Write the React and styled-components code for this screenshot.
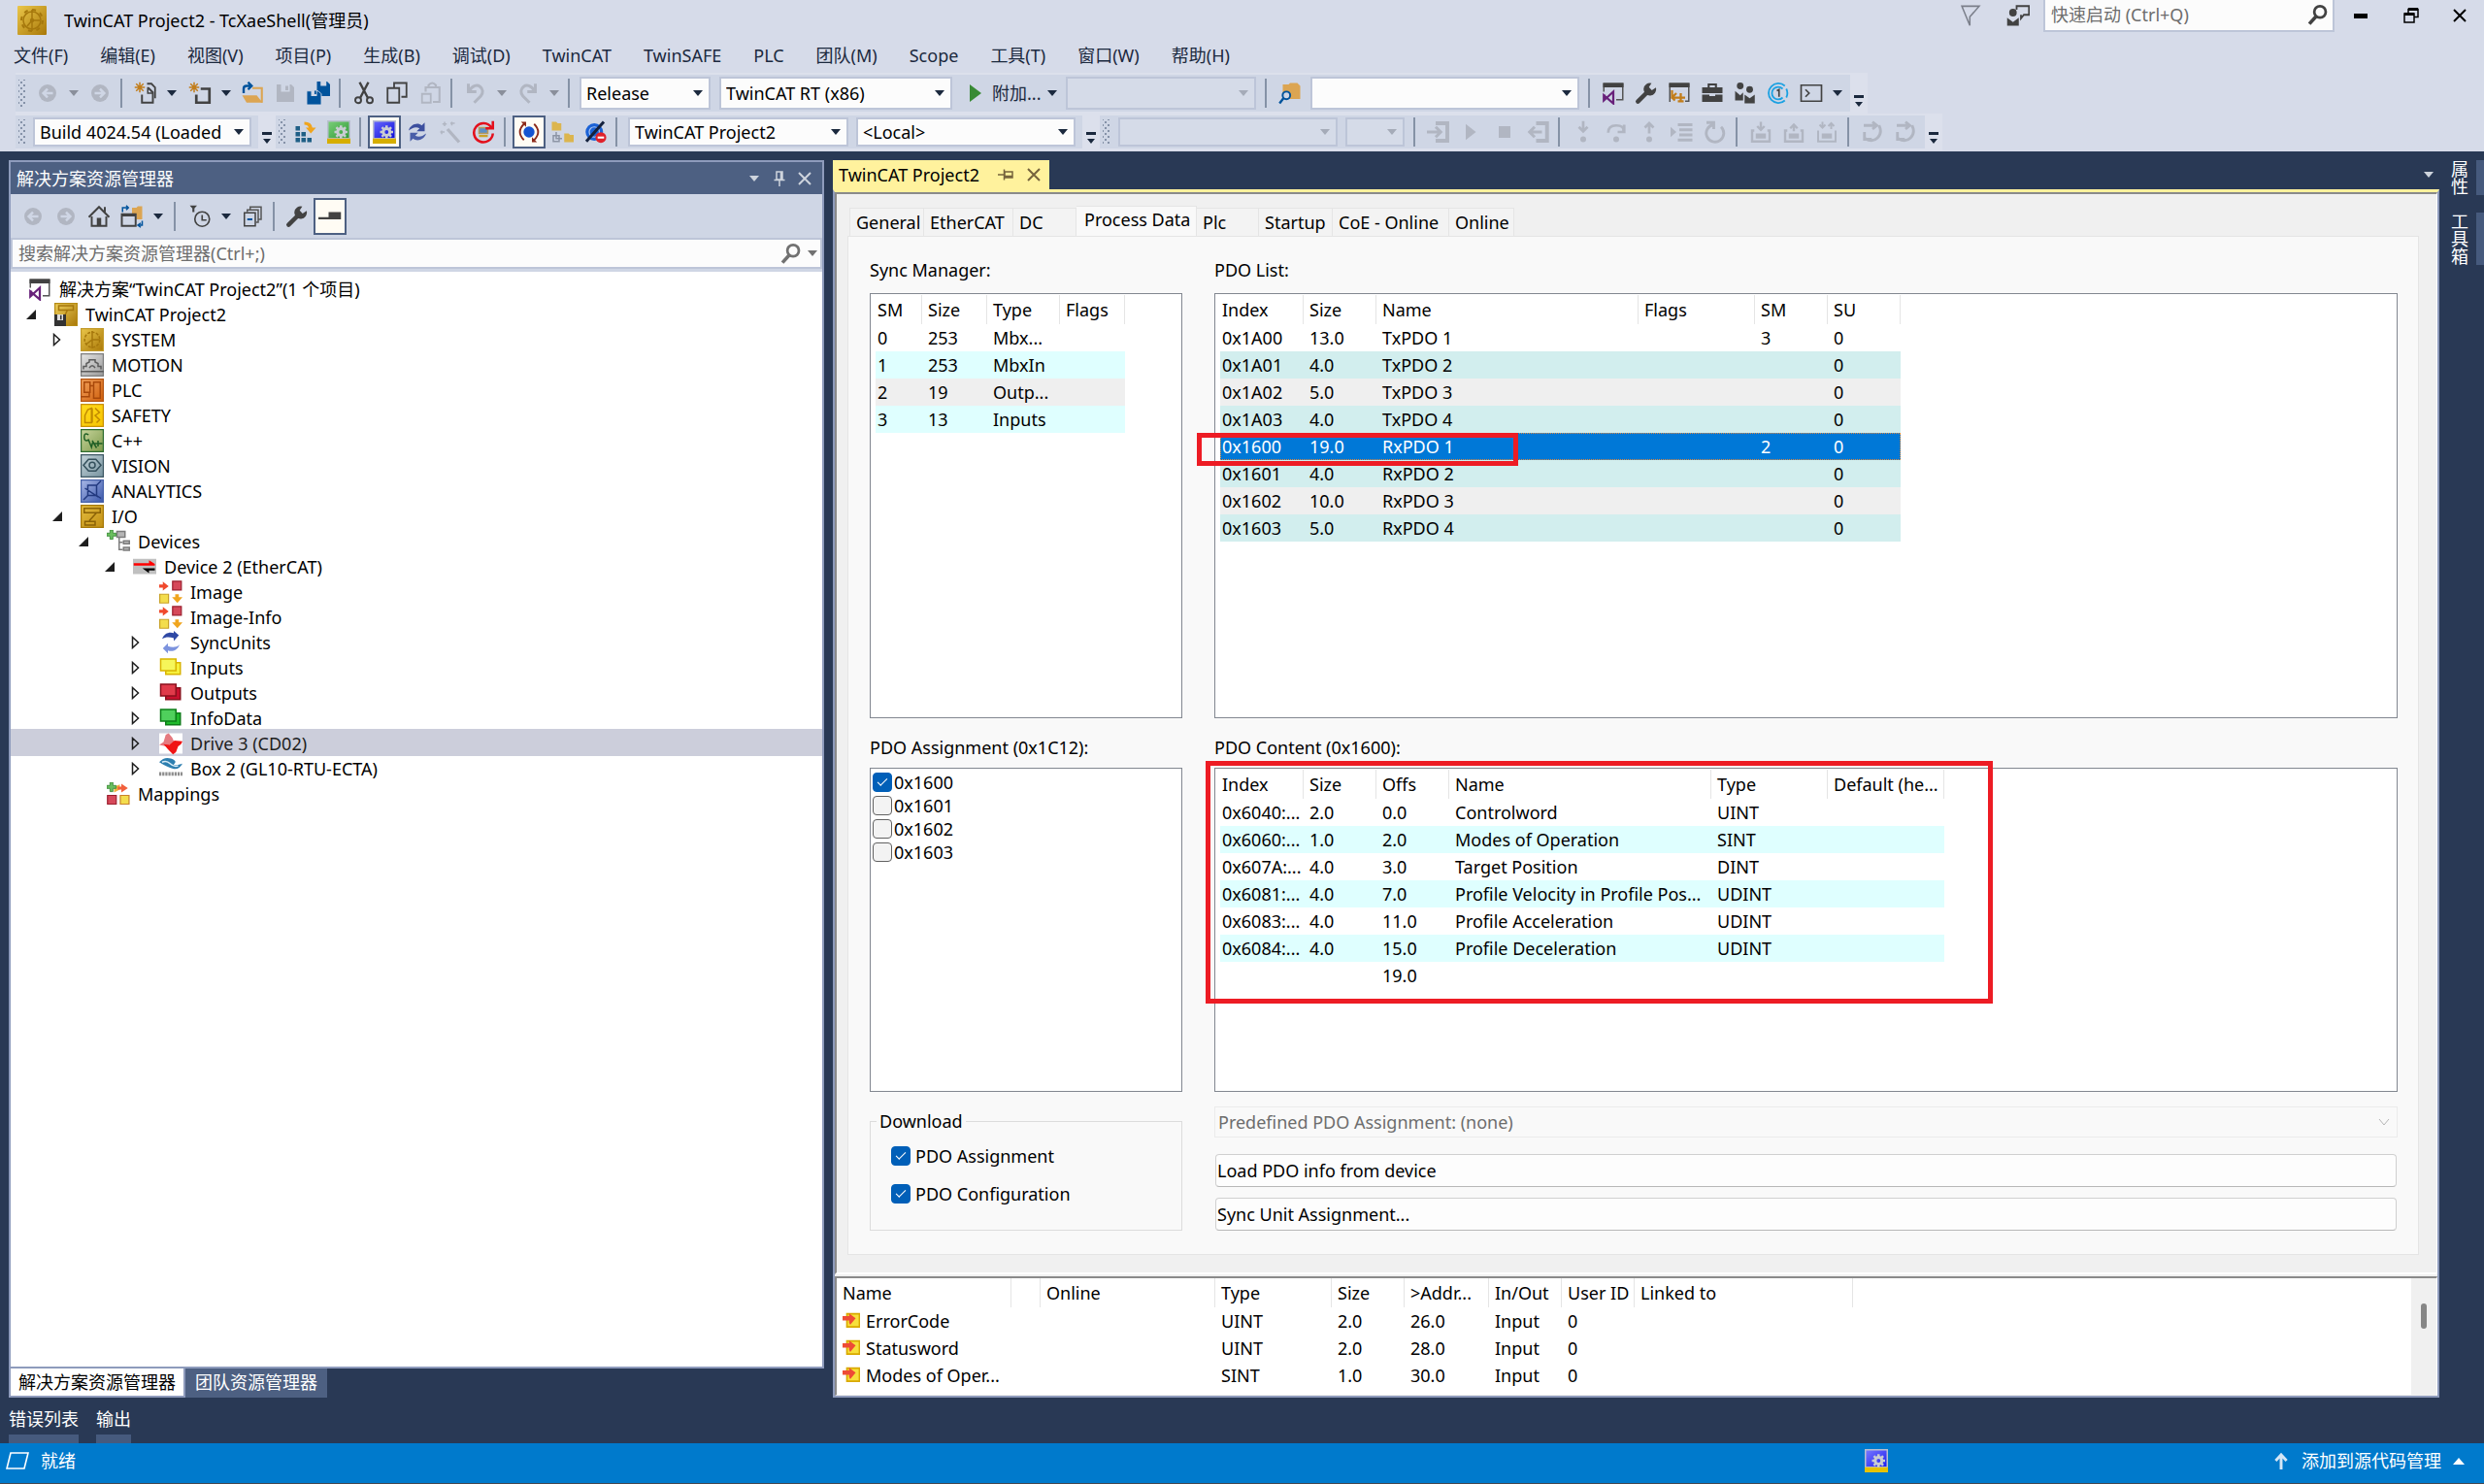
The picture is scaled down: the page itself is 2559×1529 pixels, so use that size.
import React from 'react';
import styled, { createGlobalStyle, css } from 'styled-components';

const c = {
  shell: '#293955',
  header: '#d6dbe9',
  bar: '#cfd6e5',
  barEdge: '#dce0ec',
  frame: '#8e9bbc',
  title: '#4d6082',
  inputEdge: '#bdc5d8',
  ink: '#1b293e',
  dim: '#b1b6c2',
  accent: '#007acc',
  pressed: '#fffcf4',
  mark: '#ed1c24',
};

const Global = createGlobalStyle`
  *, *::before, *::after { box-sizing: border-box; }
  body {
    margin: 0;
    background: ${c.shell};
    color: #000;
    font: 18px/24px 'Noto Sans', 'Noto Sans CJK SC', sans-serif;
  }
  button, input, select { font: inherit; color: inherit; }
  button { padding: 0; border: 0; background: none; }
  svg { display: block; flex: none; }
`;

/* ---------- Shell ---------- */

const Shell = styled.div`
  display: flex;
  flex-direction: column;
  height: 100vh;
  min-height: 900px;
  overflow: hidden;
`;

const Header = styled.header`
  background: ${c.header};
  height: 156px;
  flex: none;
`;

const TitleBar = styled.div`
  display: flex;
  align-items: flex-start;
  height: 42px;
  padding-left: 18px;
`;

const AppTitle = styled.h1`
  display: flex;
  align-items: center;
  gap: 18px;
  height: 42px;
  margin: 0 auto 0 0;
  font-size: 18px;
  font-weight: 400;
`;

const TitleTools = styled.div`
  display: flex;
  align-items: center;
  height: 32px;
`;

const TitleButton = styled.button`
  display: grid;
  place-items: center;
  width: ${(p) => p.$w}px;
  height: 32px;
`;

const QuickLaunch = styled.label`
  display: flex;
  align-items: center;
  width: 300px;
  height: 33px;
  padding-right: 4px;
  background: #fcfcfc;
  border: 2px solid ${c.inputEdge};
  border-top: 0;
`;

const PlainInput = styled.input`
  flex: 1;
  min-width: 0;
  height: 100%;
  padding: 0 6px;
  border: 0;
  outline: 0;
  background: none;
  &::placeholder { color: #6d6d6d; opacity: 1; }
`;

const MenuBar = styled.nav`
  display: flex;
  gap: 33px;
  height: 33px;
  padding-left: 14px;
`;

const MenuItem = styled.button`
  height: 30px;
  white-space: nowrap;
  color: ${c.ink};
`;

/* ---------- Toolbars ---------- */

const ToolRow = styled.div`
  display: flex;
  height: ${(p) => p.$h}px;
  padding-left: 16px;
`;

const Strip = styled.div`
  display: flex;
  align-items: center;
  padding-right: ${(p) => p.$end || 3}px;
  background: ${c.bar};
  border: solid ${c.barEdge};
  border-width: 2px 0;
`;

const Grip = styled.span`
  width: 8px;
  height: ${(p) => p.$h || 28}px;
  margin: 0 ${(p) => p.$after || 8}px 0 3px;
  background-image: radial-gradient(circle, #8592a8 1px, transparent 1px),
    radial-gradient(circle, #8592a8 1px, transparent 1px);
  background-size: 6px 6px;
  background-position: 0 0, 3px 3px;
`;

const Sep = styled.span`
  width: 2px;
  height: 30px;
  margin: 0 ${(p) => p.$after || 7}px 0 ${(p) => p.$before || 4}px;
  background: #8592a6;
`;

const ToolButton = styled.button`
  display: grid;
  place-items: center;
  width: 34px;
  height: 32px;
  ${(p) =>
    p.$on &&
    css`
      background: ${c.pressed};
      border: 2px solid ${c.title};
      height: ${p.$tall ? 38 : 34}px;
    `}
`;

const ArrowButton = styled.button`
  display: grid;
  place-items: center;
  width: 20px;
  height: 32px;
  margin-right: ${(p) => p.$after || 0}px;
`;

const AttachButton = styled.button`
  display: flex;
  align-items: center;
  gap: 11px;
  margin: 0 2px 0 18px;
  color: ${c.ink};
`;

const ComboBox = styled.span`
  display: grid;
  align-items: center;
  width: ${(p) => p.$w}px;
  height: ${(p) => p.$h || 34}px;
  margin-left: ${(p) => p.$before || 0}px;
  background: ${(p) => (p.$off ? '#d5dbe8' : '#fcfcfc')};
  border: 2px solid ${c.inputEdge};
  > * { grid-area: 1 / 1; }
  > svg { justify-self: end; margin-right: 6px; pointer-events: none; }
`;

const ComboSelect = styled.select`
  appearance: none;
  width: 100%;
  height: 100%;
  padding: 0 20px 0 5px;
  border: 0;
  outline: 0;
  background: none;
  opacity: 1;
`;

const OverflowButton = styled.button`
  display: flex;
  align-items: flex-end;
  justify-content: center;
  width: 18px;
  padding-bottom: 6px;
  background: ${c.barEdge};
`;

/* ---------- Workspace ---------- */

const Workspace = styled.main`
  display: flex;
  flex: 1;
  min-height: 0;
  padding: 9px 0 0 9px;
`;

const Side = styled.aside`
  display: flex;
  flex-direction: column;
  width: 840px;
  flex: none;
`;

const SidePanel = styled.section`
  display: flex;
  flex-direction: column;
  flex: 1;
  min-height: 0;
  border: 2px solid ${c.frame};
`;

const PanelTitle = styled.h2`
  display: flex;
  align-items: center;
  height: 33px;
  margin: 0;
  padding: 0 5px 0 6px;
  background: ${c.title};
  color: #fff;
  font-size: 18px;
  font-weight: 400;
  > span { flex: 1; }
`;

const PanelButton = styled.button`
  display: grid;
  place-items: center;
  width: 26px;
  height: 30px;
`;

const PanelTools = styled.div`
  display: flex;
  align-items: center;
  height: 45px;
  padding-left: 6px;
  background: ${c.bar};
`;

const PanelSearch = styled.label`
  display: flex;
  align-items: center;
  gap: 6px;
  height: 32px;
  padding-right: 3px;
  background: #fcfcfc;
  border: 2px solid ${c.inputEdge};
`;

const Tree = styled.ul`
  flex: 1;
  margin: 0;
  padding: 5px 0 0;
  list-style: none;
  background: #fff;
  border-top: 3px solid ${c.bar};
  overflow: hidden;
`;

const TreeItem = styled.li`
  display: flex;
  align-items: center;
  height: 26px;
  padding-left: ${(p) => (p.$level ? p.$level * 27 - 12 : 18)}px;
  white-space: nowrap;
  ${(p) =>
    p.$selected &&
    css`
      background: #cccedb;
      box-shadow: 0 -2px #cccedb;
      color: #1e1e1e;
    `}
`;

const Twisty = styled.span`
  display: flex;
  width: 30px;
  padding-left: 1px;
`;

const TreeLabel = styled.span`
  margin-left: 8px;
`;

const SideTabs = styled.div`
  display: flex;
  height: 30px;
`;

const SideTab = styled.button`
  height: 30px;
  padding: 0 8px;
  background: ${(p) => (p.$active ? '#fff' : c.title)};
  color: ${(p) => (p.$active ? '#000' : '#fff')};
  border: 2px solid ${(p) => (p.$active ? c.frame : c.title)};
  border-top: 0;
`;

const Doc = styled.section`
  display: flex;
  flex-direction: column;
  flex: 1;
  min-width: 0;
  margin-left: 9px;
`;

const DocTabs = styled.div`
  display: flex;
  align-items: center;
  justify-content: space-between;
  height: 30px;
  padding-right: 6px;
`;

const DocTab = styled.div`
  display: flex;
  align-items: center;
  align-self: stretch;
  gap: 14px;
  padding: 0 9px 0 6px;
  background: #fff29d;
  > span { margin-right: 5px; }
`;

const Editor = styled.div`
  display: flex;
  flex-direction: column;
  flex: 1;
  min-height: 0;
  background: #f0f0f0;
  border: 2px solid ${c.frame};
  border-top: 3px solid #fff29d;
`;

const EditorPane = styled.div`
  display: flex;
  flex-direction: column;
  flex: 1;
  min-height: 0;
  padding: 12px 18px 18px 11px;
  border: 2px solid #8a8a8a;
  border-right: 1px solid #fff;
  border-bottom: 2px solid #fff;
`;

const PageTabs = styled.div`
  display: flex;
  align-items: flex-end;
  height: 32px;
  padding-left: 2px;
  margin-bottom: -1px;
`;

const PageTab = styled.button`
  width: ${(p) => p.$w}px;
  height: ${(p) => (p.$active ? 32 : 30)}px;
  padding: 0 0 ${(p) => (p.$active ? 4 : 0)}px ${(p) => (p.$active ? 8 : 6)}px;
  text-align: left;
  white-space: nowrap;
  background: ${(p) => (p.$active ? '#f9f9f9' : '#f3f3f3')};
  border: 1px solid #e5e5e5;
  border-left-width: ${(p) => (p.$first ? 1 : 0)}px;
  border-bottom-color: ${(p) => (p.$active ? '#f9f9f9' : '#e5e5e5')};
`;

const Page = styled.div`
  display: grid;
  grid-template-columns: 322px minmax(0, 1fr);
  grid-template-rows: 36px minmax(0, 438fr) 51px minmax(0, 334fr) 143px;
  column-gap: 33px;
  flex: 1;
  min-height: 0;
  padding: 22px 21px 24px 22px;
  background: #f9f9f9;
  border: 1px solid #e5e5e5;
`;

const BoxLabel = styled.h3`
  margin: 0;
  font-size: 18px;
  font-weight: 400;
  align-self: ${(p) => (p.$low ? 'end' : 'start')};
  padding-bottom: ${(p) => (p.$low ? 9 : 0)}px;
`;

const ListBox = styled.div`
  position: relative;
  padding: 1px 0 0 5px;
  background: #fff;
  border: 1px solid #828790;
`;

const Marker = styled.div`
  position: absolute;
  left: ${(p) => p.$x}px;
  top: ${(p) => p.$y}px;
  width: ${(p) => p.$w}px;
  height: ${(p) => p.$h}px;
  border: 5px solid ${c.mark};
  pointer-events: none;
`;

const Table = styled.table`
  table-layout: fixed;
  width: ${(p) => p.$w}px;
  border-collapse: separate;
  border-spacing: 0;
  th, td {
    height: 28px;
    padding: 0 0 0 6px;
    font-weight: 400;
    text-align: left;
    white-space: nowrap;
    overflow: hidden;
  }
  th { height: 30px; border-right: 1px solid #e5e5e5; }
  th:first-child, td:first-child { padding-left: ${(p) => p.$lead}px; }
`;

const Row = styled.tr`
  background: ${(p) => p.$bg || '#fff'};
  ${(p) =>
    p.$selected &&
    css`
      color: #fff;
      outline: 1px dotted #e08b3c;
      outline-offset: -1px;
    `}
`;

const CheckRow = styled.label`
  display: flex;
  align-items: center;
  gap: ${(p) => p.$gap}px;
  height: ${(p) => p.$h}px;
`;

const Check = styled.input`
  appearance: none;
  display: grid;
  place-items: center;
  width: 20px;
  height: 20px;
  margin: 0;
  background: #f3f3f3;
  border: 1px solid #626262;
  border-radius: 4px;
  &:checked { background: #005fb8; border-color: #005fb8; }
  &:checked::before {
    content: '';
    width: 10px;
    height: 5px;
    margin-bottom: 3px;
    border: solid #fff;
    border-width: 0 0 1px 1px;
    transform: rotate(-45deg);
  }
`;

const AssignBox = styled(ListBox)`
  padding: 2px 0 0 2px;
`;

const Download = styled.fieldset`
  align-self: end;
  height: 125px;
  min-width: 0;
  margin: 0;
  padding: 4px 0 0 21px;
  border: 1px solid #dcdcdc;
  legend { margin-left: -15px; padding: 0 3px; line-height: 24px; }
`;

const Actions = styled.div`
  display: flex;
  flex-direction: column;
  gap: 11px;
  padding-top: 15px;
`;

const Predefined = styled.span`
  display: grid;
  align-items: center;
  height: 32px;
  margin-bottom: 6px;
  border: 1px solid #ebebeb;
  color: #6d6d6d;
  > * { grid-area: 1 / 1; }
  > svg { justify-self: end; margin-right: 7px; pointer-events: none; }
  select {
    appearance: none;
    height: 30px;
    padding: 0 3px;
    border: 0;
    background: none;
    opacity: 1;
  }
`;

const WideButton = styled.button`
  height: 34px;
  margin: 0 1px;
  padding-left: 1px;
  text-align: left;
  background: #fdfdfd;
  border: 1px solid #d0d0d0;
  border-bottom-color: #b8b8b8;
  border-radius: 4px;
`;

const VarPane = styled.div`
  display: flex;
  align-items: flex-start;
  justify-content: space-between;
  height: 123px;
  margin-top: 2px;
  flex: none;
  background: #fff;
  border: 2px solid #8a8a8a;
  border-right: 1px solid #fff;
  border-bottom: 1px solid #f0f0f0;
  overflow: hidden;
`;

const NameCell = styled.span`
  display: flex;
  align-items: center;
  gap: 6px;
`;

const ScrollTrack = styled.div`
  align-self: stretch;
  width: 26px;
  padding: 26px 0 0 10px;
  background: #f0f0f0;
`;

const ScrollThumb = styled.div`
  width: 6px;
  height: 26px;
  border-radius: 3px;
  background: #868686;
`;

const Rail = styled.nav`
  display: flex;
  flex-direction: column;
  align-items: flex-end;
  gap: 18px;
  width: 46px;
  flex: none;
`;

const RailTab = styled.button`
  writing-mode: vertical-rl;
  line-height: 36px;
  padding: 0;
  color: #fff;
  border-right: 8px solid #465a7d;
`;

const OutputTabs = styled.div`
  display: flex;
  gap: 18px;
  height: 47px;
  padding: 8px 0 0 9px;
  flex: none;
`;

const OutputTab = styled.button`
  color: #fff;
  padding-bottom: 2px;
  border-bottom: 9px solid #465a7d;
`;

const StatusBar = styled.footer`
  display: flex;
  align-items: center;
  height: 42px;
  padding: 0 20px 5px 6px;
  flex: none;
  background: ${c.accent};
  color: #fff;
  border-bottom: 1px solid #47484f;
`;

const StatusText = styled.span`
  margin: 0 auto 0 12px;
`;

const SourceControl = styled.button`
  display: flex;
  align-items: center;
  gap: 12px;
  margin-left: 396px;
`;

/* ---------- Icons ---------- */

const I = ({ s = 24, children, ...rest }) => (
  <svg width={s} height={s} viewBox="0 0 16 16" fill="none" aria-hidden="true" {...rest}>
    {children}
  </svg>
);

const Caret = ({ color = c.ink }) => (
  <svg width="10" height="6" viewBox="0 0 10 6" aria-hidden="true">
    <path d="M0 0h10L5 6z" fill={color} />
  </svg>
);

const OverflowMark = () => (
  <svg width="10" height="13" viewBox="0 0 10 13" aria-hidden="true">
    <path d="M0 0h10v3H0zM1 7h8l-4 5z" fill={c.ink} />
  </svg>
);

const GearTile = ({ light, top, base }) => {
  const id = 'g' + top.slice(1);
  return (
    <I>
      <defs>
        <linearGradient id={id} x1="0" y1="0" x2="1" y2="1">
          <stop offset="0" stopColor={light} />
          <stop offset="1" stopColor={top} />
        </linearGradient>
      </defs>
      <path d="M.5.5h15v12H.5z" fill={`url(#${id})`} stroke="#b9bfd0" />
      <path d="M0 12.500h16V16H0z" fill={base} />
      <g stroke="#c9ccd2" transform="translate(9.5 8)">
        <circle r="2.300" strokeWidth="2" />
        <path d="M0-4.500v2M0 2.500v2M-4.500 0h2M2.500 0h2M-3.200-3.200l1.400 1.400M1.800 1.800l1.400 1.400M-3.200 3.200l1.400-1.400M1.800-1.800l1.400-1.400" strokeWidth="1.700" />
      </g>
    </I>
  );
};

const Logo = () => (
  <svg width="30" height="30" viewBox="0 0 30 30" aria-hidden="true">
    <defs>
      <linearGradient id="gold" x1="0" y1="0" x2="1" y2="1">
        <stop offset="0" stopColor="#eac64a" />
        <stop offset="1" stopColor="#a97808" />
      </linearGradient>
    </defs>
    <rect width="30" height="30" rx="1" fill="url(#gold)" />
    <circle cx="15" cy="15" r="9" fill="none" stroke="#a5770c" strokeWidth="1.500" />
    <circle cx="15" cy="15" r="11" fill="none" stroke="#a5770c" strokeWidth="2" strokeDasharray="4 4.6" />
    <path d="M15 4v22M15 15h8M15 15l-5 6" stroke="#a5770c" strokeWidth="1.500" fill="none" />
    <circle cx="15" cy="15" r="2.200" fill="#a5770c" />
  </svg>
);

const NavArrow = ({ flip, color = c.dim }) => (
  <I s={22} style={flip ? { transform: 'scaleX(-1)' } : undefined}>
    <circle cx="8" cy="8" r="6.500" fill={color} />
    <path d="M12 8H5M8 4.800L4.800 8 8 11.200" stroke={c.bar} strokeWidth="1.800" />
  </I>
);

const spark = 'M4 .5v7M.5 4h7M1.500 1.500l5 5M6.500 1.500l-5 5';

const icons = {
  newProject: (
    <I>
      <path d="M9 1.500h3l2.500 2.500v7.500" stroke="#424242" strokeWidth="1.200" />
      <path d="M9 4.500h1l3 3v7H5.500V9" stroke="#424242" strokeWidth="1.300" />
      <path d="M9.500 5v3H13" stroke="#424242" />
      <path d={spark} stroke="#c27d1a" />
    </I>
  ),
  addItem: (
    <I>
      <path d="M8.500 5h6v9.500h-9V9" stroke="#424242" strokeWidth="1.800" />
      <path d={spark} stroke="#c27d1a" />
    </I>
  ),
  open: (
    <I>
      <path d="M1 9.500h10l4 5H4z" fill="#dca552" />
      <path d="M8 4.500h6.500v10" stroke="#dca552" strokeWidth="1.400" />
      <path d="M2 8V5q0-2 2-2h3M5 .5L7.500 3 5 5.500" stroke="#00539c" strokeWidth="1.600" />
    </I>
  ),
  save: (color) => (
    <I>
      <path d="M2 2h10l2 2v10H2z" fill={color} />
      <path d="M5 2h6v5H5z" fill={c.bar} />
      <path d="M8 3h2v3H8z" fill={color} />
    </I>
  ),
  saveAll: (
    <I>
      <path d="M7 0h7l2 2v8H7z" fill="#00539c" />
      <path d="M9.500 0h4v3h-4z" fill={c.bar} />
      <path d="M0 6.500h8l2 2V16H0z" fill="#00539c" stroke={c.bar} strokeWidth=".6" />
      <path d="M3 6.300h4v3.700H3z" fill={c.bar} />
      <path d="M5.300 6.300h1.200v2.400H5.300z" fill="#00539c" />
    </I>
  ),
  cut: (
    <I>
      <path d="M5 .5l5.500 10.500M11 .5L5.500 11" stroke="#424242" strokeWidth="1.600" />
      <circle cx="4" cy="12.800" r="2" stroke="#424242" strokeWidth="1.300" />
      <circle cx="12" cy="12.800" r="2" stroke="#424242" strokeWidth="1.300" />
    </I>
  ),
  copy: (
    <I>
      <path d="M6 4V1h8.500v9.500H11" stroke="#424242" strokeWidth="1.200" />
      <path d="M1.500 4.500H9.500v10h-8z" stroke="#424242" strokeWidth="1.200" />
    </I>
  ),
  paste: (
    <I>
      <path d="M5 7V4h9.500v10H10M7 4V2.500q2.500-3 5 0V4" stroke={c.dim} strokeWidth="1.400" />
      <path d="M2.500 8.500H8.500v6h-6z" stroke={c.dim} strokeWidth="1.200" />
    </I>
  ),
  undo: (
    <I>
      <path d="M3 1.500V7h5.500" stroke={c.dim} strokeWidth="2" />
      <path d="M3.500 6.500C6 2.500 9 2 11 3.500s2.500 4 .5 6.500L7 14.500" stroke={c.dim} strokeWidth="2" />
    </I>
  ),
  redo: (
    <I>
      <path d="M13 1.500V7H7.500" stroke={c.dim} strokeWidth="2" />
      <path d="M12.500 6.500C10 2.500 7 2 5 3.500s-2.500 4-.5 6.500L9 14.500" stroke={c.dim} strokeWidth="2" />
    </I>
  ),
  play: (
    <svg width="12" height="18" viewBox="0 0 12 18" aria-hidden="true">
      <path d="M0 0l12 9-12 9z" fill="#388a34" />
    </svg>
  ),
  folderSearch: (
    <I>
      <path d="M3 2h4l1-1h5l2 2v9H8L3 9z" fill="#dca552" />
      <circle cx="5.500" cy="9.500" r="2.600" fill={c.bar} stroke="#00539c" strokeWidth="1.300" />
      <path d="M3.600 11.400L.8 15" stroke="#00539c" strokeWidth="1.600" />
    </I>
  ),
  vs: (
    <I>
      <path d="M1.500 7V1.500h13v11H10" stroke="#555" />
      <path d="M1 1h14v3H1z" fill="#424242" />
      <path d="M8 7v8L1.500 9.500v3.500zM2 9v4" fill="none" stroke="#68217a" strokeWidth="1.500" />
    </I>
  ),
  wrench: (
    <I>
      <path d="M2.200 13.800L9 7" stroke="#424242" strokeWidth="3" strokeLinecap="round" />
      <path d="M14.600 4.200a4.300 4.300 0 1 1-3-3L9.800 3.800l2 2.200z" fill="#424242" />
    </I>
  ),
  windowOrg: (
    <I>
      <path d="M1.500 14V1.500h13v12H12" stroke="#555" />
      <path d="M1 1h14v3H1z" fill="#424242" />
      <path d="M3 6v5h6M6 8l-3 3 2 2M9 8v6M7 11h5M7 13.500h4" stroke="#c27d1a" strokeWidth="1.500" />
    </I>
  ),
  toolbox: (
    <I>
      <path d="M5.500 4V2h5v2" stroke="#424242" strokeWidth="1.400" />
      <path d="M1 4h14v4H1zM1 9h5v1h4V9h5v5H1z" fill="#424242" />
    </I>
  ),
  people: (
    <I>
      <circle cx="4.500" cy="3" r="2.300" fill="#424242" />
      <circle cx="11" cy="5.500" r="2.300" fill="#424242" />
      <path d="M1 6.500l3.500 3 2-2V13H1zM7.500 9l3.500 2.500L14.500 9v6h-7z" fill="#424242" />
    </I>
  ),
  circleOne: (
    <I>
      <path d="M12.500 3A6.700 6.700 0 1 0 12.500 13M11 5A4.300 4.300 0 1 0 11 11M13.500 5q1.500 3 0 6" stroke="#1ba1e2" strokeWidth="1.200" />
      <path d="M7 6.300L8.500 5.500v5" stroke="#424242" strokeWidth="1.100" />
    </I>
  ),
  command: (
    <I>
      <path d="M1 2.500h14v11H1z" stroke="#424242" strokeWidth="1.100" />
      <path d="M4 5.500L6.500 8 4 10.500" stroke="#424242" strokeWidth="1.100" />
    </I>
  ),
  download: (
    <I>
      <path d="M1 4h3v3H1zM1 8h3v3H1zM1 12h3v3H1zM5 8h3v3H5zM5 12h3v3H5zM9 12h3v3H9z" fill="#1f5f86" />
      <path d="M7 1q5 0 5.500 4H15l-3.500 4L8 5h2Q9.500 3 7 3z" fill="#f0a51e" />
    </I>
  ),
  sync: (
    <I>
      <path d="M2 7c1-4 6-6 9-3.500L13 1.500V7.500H7.500L9.500 5.500C7 4 4.500 5 2 7z" fill="#3c4f9e" />
      <path d="M14 9c-1 4-6 6-9 3.500L3 14.500V8.500h5.500L6.500 10.500C9 12 11.500 11 14 9z" fill="#4a5ea8" />
    </I>
  ),
  wand: (
    <I>
      <path d="M6 6l8 9" stroke={c.dim} strokeWidth="2.200" />
      <path d="M4 1v3M2.500 2.500h3M9 1v2.500M8 2h3M2 7v2.500M1 8h3" stroke={c.dim} />
    </I>
  ),
  restart: (
    <I>
      <path d="M5 5h6v4H5z" fill="#5b8fc7" stroke="#b89a5a" />
      <path d="M5 10h6v1.500H5z" fill="#c9a227" />
      <path d="M13.500 5A6.500 6.500 0 1 0 14.500 9M14.500 .5v5H9.500" stroke="#e3101c" strokeWidth="1.700" />
    </I>
  ),
  target: (
    <I>
      <circle cx="8" cy="8" r="3.800" fill="#1554d1" />
      <path d="M4.500 2.500Q-1 8 4.500 13.500M11.500 2.500Q17 8 11.500 13.500" stroke="#8c2a1a" strokeWidth="1.200" />
      <path d="M2.500 1H6v3.500zM13.500 15H10v-3.500z" fill="#8c2a1a" />
    </I>
  ),
  folders: (
    <I>
      <path d="M1 1h3l1 1h2.500v5H1zM9.500 9h3l1 1H16v5H9.500z" fill="#dcb54e" />
      <path d="M4 8v4.500h4M2 10.500h4v4H2z" stroke="#8d95a5" />
    </I>
  ),
  noTarget: (
    <I>
      <circle cx="7.500" cy="8" r="6" fill="#1b62d6" />
      <circle cx="7.500" cy="8" r="3.500" stroke="#a9c4f0" strokeWidth=".8" />
      <path d="M2 14.500L14 1" stroke="#14213d" strokeWidth="2" />
      <circle cx="12" cy="11.800" r="3.700" fill="#e0212b" />
      <path d="M9.800 11.800h4.400" stroke="#fff" strokeWidth="1.400" />
    </I>
  ),
  login: (
    <I>
      <path d="M6 2h8v12H6" stroke={c.dim} strokeWidth="2.600" />
      <path d="M0 8h9M6 4.500L9.500 8 6 11.500" stroke={c.dim} strokeWidth="2" />
    </I>
  ),
  start: (
    <I>
      <path d="M4 2.500l7 5.500-7 5.500z" fill={c.dim} />
    </I>
  ),
  stop: (
    <I>
      <path d="M4 4h8v8H4z" fill={c.dim} />
    </I>
  ),
  logout: (
    <I>
      <path d="M7 2h7.500v12H7" stroke={c.dim} strokeWidth="2.600" />
      <path d="M2 8h9M6 4.500L2.500 8 6 11.500" stroke={c.dim} strokeWidth="2" />
    </I>
  ),
  stepInto: (
    <I>
      <path d="M8 .5v7M5 4.500l3 3 3-3" stroke={c.dim} strokeWidth="1.800" />
      <circle cx="8" cy="13" r="2" fill={c.dim} />
    </I>
  ),
  stepOver: (
    <I>
      <path d="M2.500 8.500q0-5 5.500-5t5 4M13.500 3v5H9" stroke={c.dim} strokeWidth="1.800" />
      <circle cx="8" cy="13" r="2" fill={c.dim} />
    </I>
  ),
  stepOut: (
    <I>
      <path d="M8 9V2M5 5l3-3 3 3" stroke={c.dim} strokeWidth="1.800" />
      <circle cx="8" cy="13" r="2" fill={c.dim} />
    </I>
  ),
  runTo: (
    <I>
      <path d="M0 4.500L4 8l-4 3.500zM5 2h10v2H5zM6 5.500h9v2H6zM6 9h9v2H6zM5 12.500h10v2H5z" fill={c.dim} />
    </I>
  ),
  cycle: (
    <I>
      <path d="M6.500 3A6 6 0 1 0 12 4.500M2 1.500h5v4.500" stroke={c.dim} strokeWidth="1.900" />
    </I>
  ),
  boxIn: (
    <I>
      <path d="M3.500 7H2v7.500h12V7h-1.500M8 1v5M5.500 4L8 6.500 10.500 4" stroke={c.dim} strokeWidth="1.600" />
      <path d="M4.500 9h7v3.500h-7z" fill={c.dim} />
    </I>
  ),
  boxOut: (
    <I>
      <path d="M3.500 7H2v7.500h12V7h-1.500M8 7.500V3M5.500 5.500L8 3l2.500 2.500" stroke={c.dim} strokeWidth="1.600" />
      <path d="M4.500 9h7v3.500h-7z" fill={c.dim} />
    </I>
  ),
  boxBoth: (
    <I>
      <path d="M2 7v7.500h12V7M5 1v4M3 3l2 2 2-2M11 6V2M9 4l2-2 2 2" stroke={c.dim} strokeWidth="1.300" />
      <path d="M4.500 9h7v3.500h-7z" fill={c.dim} />
    </I>
  ),
  flow: (
    <I>
      <path d="M2 3.500h9M8 1l3 2.500L8 6M2.500 8v5h5M3 12.500q5 3 8.500-.5t1-8.500" stroke={c.dim} strokeWidth="1.900" />
    </I>
  ),
  home: (
    <I>
      <path d="M1 8.500L8 1.500l7 7M12 5V1.500" stroke="#424242" strokeWidth="1.300" />
      <path d="M3 8v6.500h10V8" stroke="#424242" strokeWidth="1.300" />
      <path d="M6.500 9h3v5.500h-3z" fill="#424242" />
    </I>
  ),
  syncView: (
    <I>
      <path d="M8 2h3l1-1h3v9h-4V7H8z" fill="#dca552" />
      <path d="M1 6.500h9.500v8H1z" stroke="#424242" strokeWidth="1.300" fill={c.bar} />
      <path d="M1 6h9.500v2H1z" fill="#424242" />
      <path d="M1.500 5V2H5M4 .5L5.500 2 4 3.500M15 11v3h-2.500M14 12.500L12 14l2 1.500" stroke="#00539c" />
    </I>
  ),
  history: (
    <I>
      <circle cx="9.500" cy="9.800" r="5" stroke="#424242" strokeWidth="1.100" />
      <path d="M9.500 7v3.500h3" stroke="#424242" strokeWidth="1.100" />
      <path d="M1 .5h5L4.200 2.500V5H2.800V2.500z" fill="#424242" />
    </I>
  ),
  collapse: (
    <I>
      <path d="M6.500 3V1.500h7.500V10h-1.500M4.500 5V3.500H12V12h-1.500" stroke="#555" />
      <path d="M2.500 5.500H10v9H2.500z" stroke="#424242" />
      <path d="M4.500 10H8" stroke="#00539c" strokeWidth="1.300" />
    </I>
  ),
  preview: (
    <I>
      <path d="M0 8.500h7V5h8.500v5H0z" fill="#424242" />
    </I>
  ),
  search: (color) => (
    <I s={22}>
      <circle cx="9.500" cy="6" r="4.300" stroke={color} strokeWidth="2" />
      <path d="M6.500 9.500L1.500 15" stroke={color} strokeWidth="2.600" />
    </I>
  ),
  flag: (
    <I s={22}>
      <path d="M1.500 1h13L7.500 9v6.500z" stroke="#7b7f8a" strokeWidth="1.100" />
    </I>
  ),
  feedback: (
    <I>
      <path d="M7 4V1.500h8.500v6H12L10 10V7.500" stroke="#424242" strokeWidth="1.200" />
      <circle cx="4.500" cy="6" r="2.600" fill="#424242" />
      <path d="M0.500 9.500l4 3 4-3V15h-8z" fill="#424242" />
    </I>
  ),
  minimize: (
    <svg width="14" height="5" viewBox="0 0 14 5" aria-hidden="true">
      <path d="M0 0h14v5H0z" fill="#000" />
    </svg>
  ),
  restore: (
    <svg width="16" height="16" viewBox="0 0 16 16" fill="none" aria-hidden="true">
      <path d="M5 5V1.500h10v8h-4" stroke="#000" strokeWidth="1.500" />
      <path d="M5 1.500h10" stroke="#000" strokeWidth="3" />
      <path d="M1 6h10v9H1z" stroke="#000" strokeWidth="1.500" />
      <path d="M1 6.500h10" stroke="#000" strokeWidth="3" />
    </svg>
  ),
  close: (color) => (
    <svg width="14" height="14" viewBox="0 0 14 14" fill="none" aria-hidden="true">
      <path d="M1 1l12 12M13 1L1 13" stroke={color} strokeWidth="2" />
    </svg>
  ),
  pin: (color, side) => (
    <I s={16} style={side ? { transform: 'rotate(90deg)' } : undefined}>
      <path d="M5 1h6v8H5zM2.500 9.500h11M8 10v6M9.500 1v8" stroke={color} strokeWidth="1.500" />
    </I>
  ),
  up: (
    <I s={18}>
      <path d="M8 16V3M3 8l5-5.500L13 8" stroke="#d5e6f5" strokeWidth="2.600" />
    </I>
  ),
  slant: (
    <svg width="24" height="18" viewBox="0 0 24 18" fill="none" aria-hidden="true">
      <path d="M5 1h18l-4 16H1z" stroke="#fff" strokeWidth="1.600" />
    </svg>
  ),
};

const Tile = ({ from, to, edge, children }) => {
  const id = 't' + from.slice(1) + to.slice(1);
  return (
    <I>
      <defs>
        <linearGradient id={id} x1="0" y1="0" x2="1" y2="1">
          <stop offset="0" stopColor={from} />
          <stop offset="1" stopColor={to} />
        </linearGradient>
      </defs>
      <path d="M.4.4h15.200v15.200H.4z" fill={`url(#${id})`} stroke={edge} strokeWidth=".8" />
      {children}
    </I>
  );
};

const Stack = ({ a, b, edge }) => (
  <I>
    <path d="M4.500 4.500h10v8h-10z" fill={b} stroke={edge} />
    <path d="M1 2h10.500v8H1z" fill={a} stroke={edge} />
  </I>
);

const Square = ({ x, y, fill, edge }) => (
  <path d={`M${x} ${y}h6v6h-6z`} fill={fill} stroke={edge} strokeWidth=".8" />
);

const ImageIcon = () => (
  <I>
    <Square x={9.200} y={0.600} fill="#d6495a" edge="#9c1f2e" />
    <Square x={0.400} y={9.500} fill="#f3dd4d" edge="#c9a227" />
    <path d="M0 2.800h2.500V.8L6.500 4 2.500 7V5H0z" fill="#f0492c" />
    <path d="M8.800 11.500h2.200V9.500h2.500v2h2.500L12.500 15.500z" fill="#f0a51e" />
  </I>
);

const treeIcons = {
  solution: icons.vs,
  project: (
    <Tile from="#efd05c" to="#a97808" edge="#b58b16">
      <path d="M3 2h10v3H3zM9 5L7 9" stroke="#a5770c" />
      <path d="M0 8h8v8H0z" fill="#333" />
      <path d="M2 8h4v4H2z" fill="#ddd" />
      <path d="M4 8.500h1v3H4z" fill="#333" />
    </Tile>
  ),
  system: (
    <Tile from="#eac64a" to="#a97808" edge="#c29a2a">
      <circle cx="8" cy="8" r="5.200" stroke="#a5770c" strokeDasharray="2 1" />
      <path d="M8 2v12M8 8h5M8 8l-4 3" stroke="#a5770c" />
    </Tile>
  ),
  motion: (
    <Tile from="#e6e6e6" to="#9a9a9a" edge="#7d7d7d">
      <path d="M2 11V9h2V7l2-1V4.500h4V6l2 1v2h2v2M6 10q2-3 4 0" stroke="#5c5c5c" />
      <path d="M0 12.500h16" stroke="#5c5c5c" />
    </Tile>
  ),
  plc: (
    <Tile from="#f3a25c" to="#cf5f0c" edge="#b55410">
      <path d="M2.500 2.500h4v7h-4zM9 2.500h4.500v11H9zM0 12.500h6V10M6.500 5H9" stroke="#a8480a" />
    </Tile>
  ),
  safety: (
    <Tile from="#ffdc1f" to="#f7c400" edge="#c99000">
      <path d="M3 8l2-4 2.500-1v10H3zM10 3l3 3-3 2 3 3-2 2M8 3v10" stroke="#c08a00" />
    </Tile>
  ),
  cpp: (
    <Tile from="#c8d59c" to="#7d9a4c" edge="#2c6b2f">
      <path d="M5.500 4q-3-2-3 1.500t3 2l2 5 1-4M8 8l3 5M9 10h6M12 8v4" stroke="#1e5e24" />
    </Tile>
  ),
  vision: (
    <Tile from="#c3d3d9" to="#7894a0" edge="#3d5763">
      <path d="M2 7.500l3.500-4h5l3.500 4-3.500 4h-5z" stroke="#34505c" />
      <circle cx="8" cy="7.500" r="2" stroke="#34505c" />
    </Tile>
  ),
  analytics: (
    <Tile from="#a9b8e6" to="#3a57ab" edge="#4560a8">
      <path d="M5 4h6v7H5zM5 11l-3 3M11 4l3-3M3 6l9 6M11 11l3 2" stroke="#22397f" />
    </Tile>
  ),
  io: (
    <Tile from="#e6bd3e" to="#c08f14" edge="#a57808">
      <path d="M2.500 2.500h11v3h-11zM3 11.500h7v2.500H3zM11 5.500L6 11" stroke="#8a6206" />
    </Tile>
  ),
  devices: (
    <I>
      <path d="M8.500 5v8.500H11M8.500 8.500H11" stroke="#7d7d7d" />
      <path d="M7 1h5.500v4H7zM11.500 7.500h4v2h-4zM11.500 12h4v2h-4z" fill="#b5b5b5" stroke="#7d7d7d" />
      <path d="M2.200 0h2v2.200h2.200v2H4.200v2.200h-2V4.200H0v-2h2.200z" fill="#6abf5e" stroke="#3c8a3a" strokeWidth=".6" />
    </I>
  ),
  ethercat: (
    <I>
      <path d="M0 2.500h16V13H0z" fill="#c0c0c0" />
      <path d="M.5 5.500H11V3.500L15 6v1.200H.5z" fill="#f00" />
      <path d="M15 9H6.500L11 12.300V10.500h4z" fill="#000" />
    </I>
  ),
  image: <ImageIcon />,
  syncUnits: (
    <I>
      <path d="M2 5.500c1.500-4 5-5 8-4V0l3.500 3-3.500 4V5C7 4 4.500 4 2 5.500z" fill="#2f49a5" />
      <path d="M14 9.500c-1.500 4-5 5-8 4V15.500L2.500 12 6 8.500v2c3 1 5.500 1 8-1z" fill="#7c93de" />
    </I>
  ),
  inputs: <Stack a="#f6f65a" b="#f6f03c" edge="#d9b400" />,
  outputs: <Stack a="#e03a4a" b="#c8102e" edge="#8a0f1c" />,
  info: <Stack a="#4fd05c" b="#1fb92c" edge="#0d7d18" />,
  drive: (
    <I>
      <path d="M0 1h16v14H0z" fill="#fff" />
      <path d="M0 9l3-2 1.500-5L6.500 1 9 4l1.500 3.500L5 10z" fill="#e57a80" />
      <path d="M3 8.500l4 .5 3.500-3 5.500.5-1 2-2 1.500-1.500 4-2 1.500L6 12z" fill="#f01414" />
    </I>
  ),
  box: (
    <I>
      <path d="M0 3.500q3.500-4 8-2.500t2.500 3.500 5.500 0q-2.500 4.500-6.500 3.500T0 3.500z" fill="#2d7fb0" />
      <path d="M2 3.500q3-1.500 5.500 1t5.500 1.500" stroke="#d9ecf7" />
      <path d="M0 11.500h16" stroke="#8d8d8d" strokeWidth="2.500" strokeDasharray="1.500 .6" />
    </I>
  ),
  mappings: (
    <I>
      <Square x={0.500} y={9} fill="#d6495a" edge="#9c1f2e" />
      <Square x={9.300} y={9} fill="#f3dd4d" edge="#c9822a" />
      <path d="M5 3l4-1.500V5L5 7z" fill="#f0b13c" />
      <path d="M7.500 3H10V1l4.500 3L10 7V5H7.500z" fill="#f2603c" />
      <path d="M2.200 0h2v2.200h2.200v2H4.200v2.200h-2V4.200H0v-2h2.200z" fill="#6abf5e" stroke="#3c8a3a" strokeWidth=".6" />
    </I>
  ),
};

const VarIcon = () => (
  <I s={18}>
    <path d="M4 1.500h11.500v12H4z" fill="#f7e03c" stroke="#d9a900" strokeWidth="1.500" />
    <path d="M0 3.500h6V1l6 4.500-5 6-1-2v-2H0z" fill="#ee4b36" />
  </I>
);

const Open = () => (
  <svg width="10" height="10" viewBox="0 0 10 10" aria-hidden="true">
    <path d="M10 0v10H0z" fill="#1e1e1e" />
  </svg>
);

const Closed = () => (
  <svg width="9" height="14" viewBox="0 0 9 14" fill="none" aria-hidden="true">
    <path d="M1.500 1.500v11l6-5.500z" stroke="#1e1e1e" strokeWidth="1.500" />
  </svg>
);

/* ---------- Data ---------- */

const menu = ['文件(F)', '编辑(E)', '视图(V)', '项目(P)', '生成(B)', '调试(D)', 'TwinCAT', 'TwinSAFE', 'PLC', '团队(M)', 'Scope', '工具(T)', '窗口(W)', '帮助(H)'];

const tree = [
  [0, '', 'solution', '解决方案“TwinCAT Project2”(1 个项目)'],
  [1, 'open', 'project', 'TwinCAT Project2'],
  [2, 'closed', 'system', 'SYSTEM'],
  [2, '', 'motion', 'MOTION'],
  [2, '', 'plc', 'PLC'],
  [2, '', 'safety', 'SAFETY'],
  [2, '', 'cpp', 'C++'],
  [2, '', 'vision', 'VISION'],
  [2, '', 'analytics', 'ANALYTICS'],
  [2, 'open', 'io', 'I/O'],
  [3, 'open', 'devices', 'Devices'],
  [4, 'open', 'ethercat', 'Device 2 (EtherCAT)'],
  [5, '', 'image', 'Image'],
  [5, '', 'image', 'Image-Info'],
  [5, 'closed', 'syncUnits', 'SyncUnits'],
  [5, 'closed', 'inputs', 'Inputs'],
  [5, 'closed', 'outputs', 'Outputs'],
  [5, 'closed', 'info', 'InfoData'],
  [5, 'closed', 'drive', 'Drive 3 (CD02)'],
  [5, 'closed', 'box', 'Box 2 (GL10-RTU-ECTA)'],
  [3, '', 'mappings', 'Mappings'],
];

const pageTabs = [
  ['General', 77],
  ['EtherCAT', 92],
  ['DC', 65],
  ['Process Data', 124],
  ['Plc', 64],
  ['Startup', 76],
  ['CoE - Online', 120],
  ['Online', 67],
];

const aqua = '#dfffff';
const teal = '#d2eeee';
const grey = '#efefef';

const syncManager = {
  cols: [['SM', 48], ['Size', 67], ['Type', 75], ['Flags', 67]],
  rows: [
    [['0', '253', 'Mbx...', '']],
    [['1', '253', 'MbxIn', ''], aqua],
    [['2', '19', 'Outp...', ''], grey],
    [['3', '13', 'Inputs', ''], aqua],
  ],
};

const pdoList = {
  cols: [['Index', 86], ['Size', 75], ['Name', 270], ['Flags', 120], ['SM', 75], ['SU', 75]],
  rows: [
    [['0x1A00', '13.0', 'TxPDO 1', '', '3', '0']],
    [['0x1A01', '4.0', 'TxPDO 2', '', '', '0'], teal],
    [['0x1A02', '5.0', 'TxPDO 3', '', '', '0'], grey],
    [['0x1A03', '4.0', 'TxPDO 4', '', '', '0'], teal],
    [['0x1600', '19.0', 'RxPDO 1', '', '2', '0'], '#0078d7', true],
    [['0x1601', '4.0', 'RxPDO 2', '', '', '0'], teal],
    [['0x1602', '10.0', 'RxPDO 3', '', '', '0'], grey],
    [['0x1603', '5.0', 'RxPDO 4', '', '', '0'], teal],
  ],
};

const pdoContent = {
  cols: [['Index', 86], ['Size', 75], ['Offs', 75], ['Name', 270], ['Type', 120], ['Default (he...', 120]],
  rows: [
    [['0x6040:...', '2.0', '0.0', 'Controlword', 'UINT', '']],
    [['0x6060:...', '1.0', '2.0', 'Modes of Operation', 'SINT', ''], aqua],
    [['0x607A:...', '4.0', '3.0', 'Target Position', 'DINT', '']],
    [['0x6081:...', '4.0', '7.0', 'Profile Velocity in Profile Pos...', 'UDINT', ''], aqua],
    [['0x6083:...', '4.0', '11.0', 'Profile Acceleration', 'UDINT', '']],
    [['0x6084:...', '4.0', '15.0', 'Profile Deceleration', 'UDINT', ''], aqua],
    [['', '', '19.0', '', '', '']],
  ],
};

const variable = (name) => (
  <NameCell>
    <VarIcon />
    {name}
  </NameCell>
);

const variables = {
  cols: [['Name', 180], ['', 30], ['Online', 180], ['Type', 120], ['Size', 75], ['>Addr...', 87], ['In/Out', 75], ['User ID', 75], ['Linked to', 225]],
  rows: [
    [[variable('ErrorCode'), '', '', 'UINT', '2.0', '26.0', 'Input', '0', '']],
    [[variable('Statusword'), '', '', 'UINT', '2.0', '28.0', 'Input', '0', '']],
    [[variable('Modes of Oper...'), '', '', 'SINT', '1.0', '30.0', 'Input', '0', '']],
  ],
};

/* ---------- Pieces ---------- */

const Tool = ({ name, icon, ...rest }) => (
  <ToolButton type="button" aria-label={name} {...rest}>
    {icon || icons[name]}
  </ToolButton>
);

const Tools = ({ names }) => names.map((n, i) => <Tool key={n + i} name={n} />);

const Drop = ({ off, after }) => (
  <ArrowButton type="button" aria-label="more" $after={after}>
    <Caret color={off ? '#8a8f9b' : c.ink} />
  </ArrowButton>
);

const Combo = ({ value = '', label, w, h, before, off }) => (
  <ComboBox $w={w} $h={h} $before={before} $off={off}>
    <ComboSelect aria-label={label} defaultValue={value} disabled={off}>
      <option>{value}</option>
    </ComboSelect>
    <Caret color={off ? '#a5abb8' : c.ink} />
  </ComboBox>
);

const Overflow = () => (
  <OverflowButton type="button" aria-label="toolbar options">
    <OverflowMark />
  </OverflowButton>
);

const Grid = ({ data, lead = 2 }) => (
  <Table $w={data.cols.reduce((sum, col) => sum + col[1], 0)} $lead={lead}>
    <colgroup>
      {data.cols.map((col, i) => (
        <col key={i} width={col[1]} />
      ))}
    </colgroup>
    <thead>
      <tr>
        {data.cols.map((col, i) => (
          <th key={i}>{col[0]}</th>
        ))}
      </tr>
    </thead>
    <tbody>
      {data.rows.map(([cells, bg, selected], i) => (
        <Row key={i} $bg={bg} $selected={selected}>
          {cells.map((cell, j) => (
            <td key={j}>{cell}</td>
          ))}
        </Row>
      ))}
    </tbody>
  </Table>
);

const TopArea = () => (
  <Header>
    <TitleBar>
      <AppTitle>
        <Logo />
        TwinCAT Project2 - TcXaeShell(管理员)
      </AppTitle>
      <TitleTools>
        <TitleButton type="button" aria-label="notifications" $w={46}>{icons.flag}</TitleButton>
        <TitleButton type="button" aria-label="feedback" $w={52}>{icons.feedback}</TitleButton>
        <QuickLaunch>
          <PlainInput placeholder="快速启动 (Ctrl+Q)" aria-label="快速启动" />
          {icons.search('#424242')}
        </QuickLaunch>
        <TitleButton type="button" aria-label="minimize" $w={54}>{icons.minimize}</TitleButton>
        <TitleButton type="button" aria-label="restore" $w={50}>{icons.restore}</TitleButton>
        <TitleButton type="button" aria-label="close" $w={50}>{icons.close('#000')}</TitleButton>
      </TitleTools>
    </TitleBar>
    <MenuBar>
      {menu.map((m) => (
        <MenuItem type="button" key={m}>{m}</MenuItem>
      ))}
    </MenuBar>
    <ToolRow $h={42}>
      <Strip>
        <Grip $after={5} />
        <Tool name="back" icon={<NavArrow />} />
        <Drop off />
        <Tool name="forward" icon={<NavArrow flip />} />
        <Sep />
        <Tool name="newProject" />
        <Drop after={2} />
        <Tool name="addItem" />
        <Drop />
        <Tool name="open" />
        <Tool name="save" icon={icons.save(c.dim)} />
        <Tool name="saveAll" />
        <Sep />
        <Tools names={['cut', 'copy', 'paste']} />
        <Sep />
        <Tool name="undo" />
        <Drop off />
        <Tool name="redo" />
        <Drop off />
        <Sep />
        <Combo w={135} value="Release" label="configuration" before={3} />
        <Combo w={240} value="TwinCAT RT (x86)" label="platform" before={9} />
        <AttachButton type="button">
          {icons.play}
          附加...
        </AttachButton>
        <Drop after={4} />
        <Combo w={196} label="target" off />
        <Sep $before={9} />
        <Tool name="folderSearch" />
        <Combo w={277} label="find" before={4} />
        <Sep $before={9} />
        <Tools names={['vs', 'wrench', 'windowOrg', 'toolbox', 'people', 'circleOne', 'command']} />
        <Drop />
      </Strip>
      <Overflow />
    </ToolRow>
    <ToolRow $h={38}>
      <Strip $end={7}>
        <Grip $h={26} $after={7} />
        <Combo w={225} h={30} value="Build 4024.54 (Loaded" label="build" />
      </Strip>
      <Overflow />
      <Strip $end={7}>
        <Grip $h={26} $after={3} />
        <Tool name="download" />
        <Tool name="config" icon={<GearTile light="#7ccf7a" top="#2f9a36" base="#d6ae00" />} />
        <Sep />
        <Tool name="run" icon={<GearTile light="#6a6aff" top="#0a0ad8" base="#d6ae00" />} $on />
        <Tools names={['sync', 'wand', 'restart']} />
        <Sep />
        <Tool name="target" $on />
        <Tools names={['folders', 'noTarget']} />
        <Sep />
        <Combo w={227} h={30} value="TwinCAT Project2" label="project" before={4} />
        <Combo w={226} h={30} value="<Local>" label="system" before={8} />
      </Strip>
      <Overflow />
      <Strip>
        <Grip $h={26} />
        <Combo w={226} h={30} label="instance" off />
        <Combo w={61} h={30} label="port" before={8} off />
        <Sep $before={9} />
        <Tools names={['login', 'start', 'stop', 'logout']} />
        <Sep />
        <Tools names={['stepInto', 'stepOver', 'stepOut', 'runTo', 'cycle']} />
        <Sep />
        <Tools names={['boxIn', 'boxOut', 'boxBoth']} />
        <Sep />
        <Tools names={['flow', 'flow']} />
      </Strip>
      <Overflow />
    </ToolRow>
  </Header>
);

const Explorer = () => (
  <Side>
    <SidePanel>
      <PanelTitle>
        <span>解决方案资源管理器</span>
        <PanelButton type="button" aria-label="window position"><Caret color="#ced4dd" /></PanelButton>
        <PanelButton type="button" aria-label="auto hide">{icons.pin('#ced4dd')}</PanelButton>
        <PanelButton type="button" aria-label="close">{icons.close('#ced4dd')}</PanelButton>
      </PanelTitle>
      <PanelTools>
        <Tool name="back" icon={<NavArrow />} />
        <Tool name="forward" icon={<NavArrow flip />} />
        <Tools names={['home', 'syncView']} />
        <Drop after={2} />
        <Sep $after={8} />
        <Tool name="history" />
        <Drop />
        <Tool name="collapse" />
        <Sep $after={6} />
        <Tool name="wrench" />
        <Tool name="preview" $on $tall />
      </PanelTools>
      <PanelSearch>
        <PlainInput placeholder="搜索解决方案资源管理器(Ctrl+;)" aria-label="搜索解决方案资源管理器" />
        {icons.search('#717171')}
        <Caret color="#717171" />
      </PanelSearch>
      <Tree role="tree">
        {tree.map(([level, state, icon, label]) => (
          <TreeItem key={label} role="treeitem" $level={level} $selected={icon === 'drive'}>
            {level > 0 && (
              <Twisty>
                {state === 'open' && <Open />}
                {state === 'closed' && <Closed />}
              </Twisty>
            )}
            {treeIcons[icon]}
            <TreeLabel>{label}</TreeLabel>
          </TreeItem>
        ))}
      </Tree>
    </SidePanel>
    <SideTabs>
      <SideTab type="button" $active>解决方案资源管理器</SideTab>
      <SideTab type="button">团队资源管理器</SideTab>
    </SideTabs>
  </Side>
);

const ProcessData = () => (
  <Page>
    <BoxLabel>Sync Manager:</BoxLabel>
    <BoxLabel>PDO List:</BoxLabel>
    <ListBox><Grid data={syncManager} /></ListBox>
    <ListBox>
      <Grid data={pdoList} />
      <Marker $x={-19} $y={143} $w={331} $h={34} />
    </ListBox>
    <BoxLabel $low>PDO Assignment (0x1C12):</BoxLabel>
    <BoxLabel $low>PDO Content (0x1600):</BoxLabel>
    <AssignBox>
      {['0x1600', '0x1601', '0x1602', '0x1603'].map((v, i) => (
        <CheckRow key={v} $gap={2} $h={24}>
          <Check type="checkbox" defaultChecked={i === 0} />
          {v}
        </CheckRow>
      ))}
    </AssignBox>
    <ListBox>
      <Grid data={pdoContent} />
      <Marker $x={-10} $y={-8} $w={811} $h={250} />
    </ListBox>
    <Download>
      <legend>Download</legend>
      <CheckRow $gap={5} $h={39}>
        <Check type="checkbox" defaultChecked />
        PDO Assignment
      </CheckRow>
      <CheckRow $gap={5} $h={39}>
        <Check type="checkbox" defaultChecked />
        PDO Configuration
      </CheckRow>
    </Download>
    <Actions>
      <Predefined>
        <select disabled aria-label="Predefined PDO Assignment">
          <option>Predefined PDO Assignment: (none)</option>
        </select>
        <svg width="12" height="8" viewBox="0 0 12 8" fill="none" aria-hidden="true">
          <path d="M1 1l5 6 5-6" stroke="#b5b5b5" />
        </svg>
      </Predefined>
      <WideButton type="button">Load PDO info from device</WideButton>
      <WideButton type="button">Sync Unit Assignment...</WideButton>
    </Actions>
  </Page>
);

export default function App() {
  return (
    <Shell>
      <Global />
      <TopArea />
      <Workspace>
        <Explorer />
        <Doc>
          <DocTabs>
            <DocTab>
              <span>TwinCAT Project2</span>
              <button type="button" aria-label="pin tab">{icons.pin('#75633d', true)}</button>
              <button type="button" aria-label="close tab">{icons.close('#75633d')}</button>
            </DocTab>
            <Caret color="#ced4dd" />
          </DocTabs>
          <Editor>
            <EditorPane>
              <PageTabs role="tablist">
                {pageTabs.map(([label, w], i) => (
                  <PageTab key={label} type="button" role="tab" $w={w} $first={i === 0} $active={i === 3}>
                    {label}
                  </PageTab>
                ))}
              </PageTabs>
              <ProcessData />
            </EditorPane>
            <VarPane>
              <Grid data={variables} lead={6} />
              <ScrollTrack><ScrollThumb /></ScrollTrack>
            </VarPane>
          </Editor>
        </Doc>
        <Rail>
          <RailTab type="button">属性</RailTab>
          <RailTab type="button">工具箱</RailTab>
        </Rail>
      </Workspace>
      <OutputTabs>
        <OutputTab type="button">错误列表</OutputTab>
        <OutputTab type="button">输出</OutputTab>
      </OutputTabs>
      <StatusBar>
        {icons.slant}
        <StatusText>就绪</StatusText>
        <GearTile light="#7a7aff" top="#1a1af0" base="#e6c200" />
        <SourceControl type="button">
          {icons.up}
          添加到源代码管理
          <svg width="12" height="7" viewBox="0 0 12 7" aria-hidden="true">
            <path d="M0 7h12L6 0z" fill="#fff" />
          </svg>
        </SourceControl>
      </StatusBar>
    </Shell>
  );
}
